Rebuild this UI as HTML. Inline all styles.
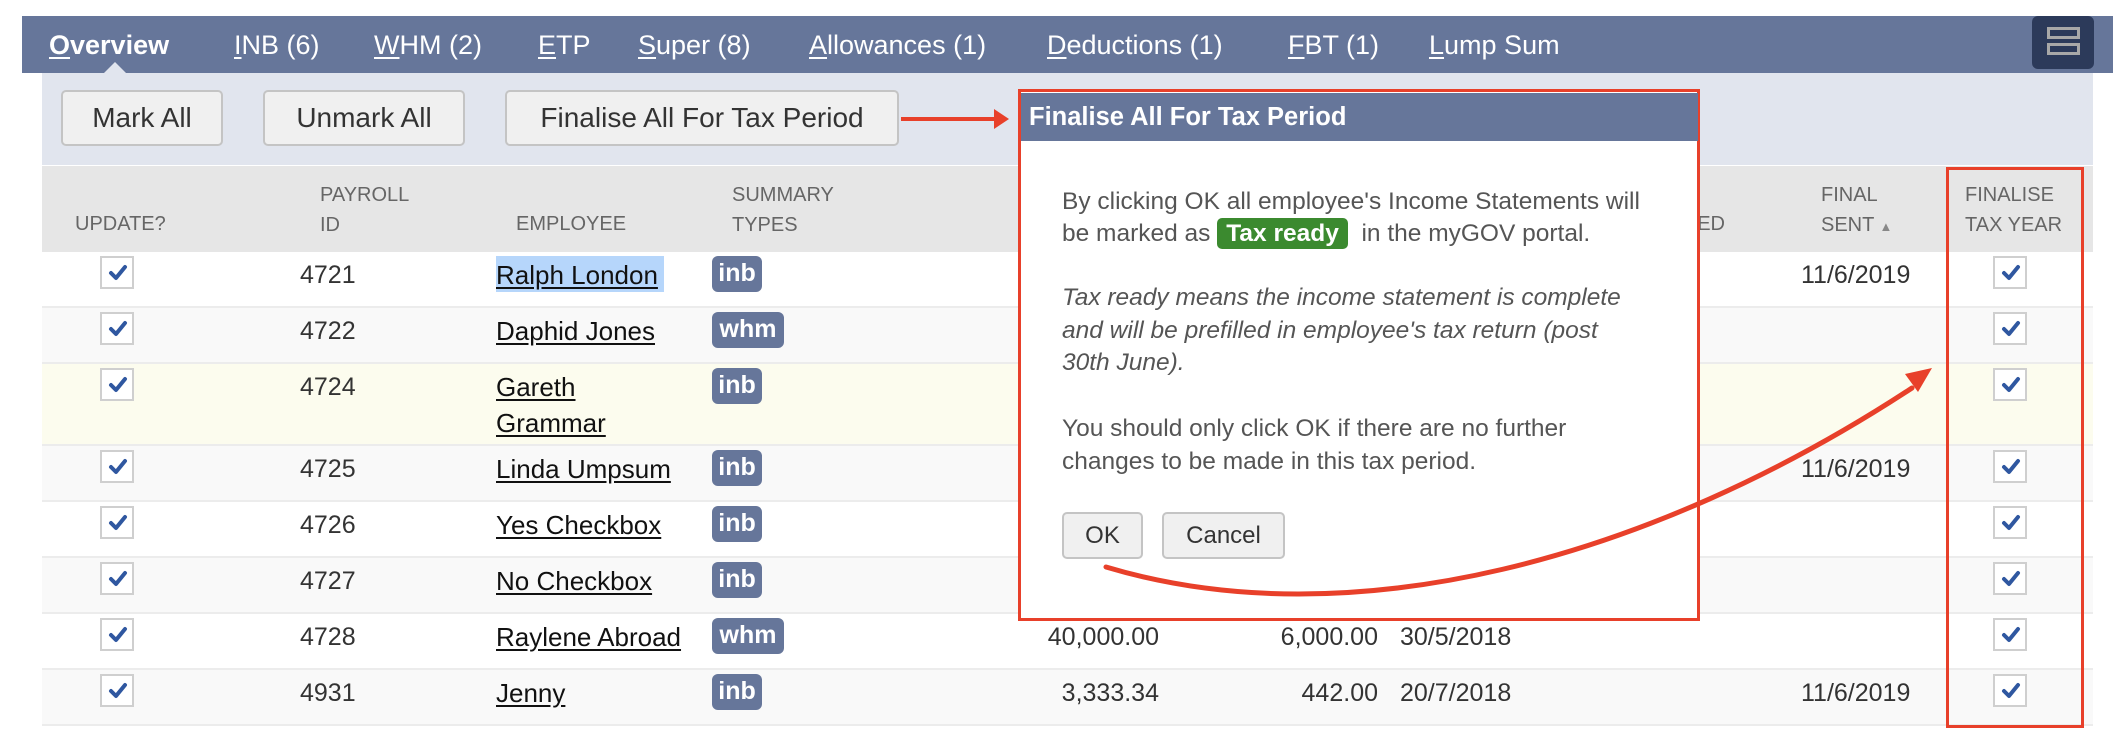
<!DOCTYPE html>
<html><head><meta charset="utf-8"><style>
*{margin:0;padding:0;box-sizing:border-box}
body{width:2124px;height:744px;background:#fff;position:relative;overflow:hidden;font-family:"Liberation Sans",Arial,sans-serif}
.a{position:absolute;white-space:nowrap}
.tab{position:absolute;top:28px;font-size:27px;color:#fff;line-height:34px}
.tab u{text-decoration:underline;text-underline-offset:3px}
.btn{position:absolute;top:90px;height:56px;background:#f0f0f0;border:2px solid #c4c4c4;border-radius:5px;font-size:28px;color:#333;text-align:center;line-height:52px}
.hd{position:absolute;font-size:20px;color:#666;line-height:30px}
.row{position:absolute;left:42px;width:2051px;border-bottom:2px solid #ececec}
.cb{position:absolute;width:34px;height:33px;border:2px solid #cfcfcf;background:#fff}
.cb svg{position:absolute;left:6px;top:5px}
.t{position:absolute;font-size:25px;color:#333;line-height:36px}
.nm{position:absolute;font-size:26px;color:#111;line-height:36px;text-decoration:underline;text-underline-offset:3px}
.bd{position:absolute;height:36px;background:#66769a;color:#fff;font-weight:bold;font-size:25px;line-height:35px;border-radius:6px;text-align:center}
.dt{position:absolute;font-size:24.5px;color:#555;line-height:32px}
</style></head><body>
<div class="a" style="left:22px;top:16px;width:2091px;height:57px;background:#66769a"></div>
<div class="tab" style="left:49px;font-weight:bold"><u>O</u>verview</div>
<div class="a" style="left:104px;top:62px;width:0;height:0;border-left:11px solid transparent;border-right:11px solid transparent;border-bottom:11px solid #e1e5ee"></div>
<div class="tab" style="left:234px"><u>I</u>NB (6)</div>
<div class="tab" style="left:374px"><u>W</u>HM (2)</div>
<div class="tab" style="left:538px"><u>E</u>TP</div>
<div class="tab" style="left:638px"><u>S</u>uper (8)</div>
<div class="tab" style="left:809px"><u>A</u>llowances (1)</div>
<div class="tab" style="left:1047px"><u>D</u>eductions (1)</div>
<div class="tab" style="left:1288px"><u>F</u>BT (1)</div>
<div class="tab" style="left:1429px"><u>L</u>ump Sum</div>
<div class="a" style="left:2032px;top:16px;width:62px;height:53px;background:#2c3a5a;border-radius:6px"></div>
<div class="a" style="left:2047px;top:27px;width:33px;height:12px;border:3px solid #a8a8a8"></div>
<div class="a" style="left:2047px;top:43px;width:33px;height:12px;border:3px solid #a8a8a8"></div>
<div class="a" style="left:42px;top:73px;width:2051px;height:92px;background:#e1e5ee"></div>
<div class="btn" style="left:61px;width:162px">Mark All</div>
<div class="btn" style="left:263px;width:202px">Unmark All</div>
<div class="btn" style="left:505px;width:394px">Finalise All For Tax Period</div>
<div class="a" style="left:901px;top:117px;width:96px;height:4px;background:#e8402a"></div>
<div class="a" style="left:994px;top:109px;width:0;height:0;border-top:10px solid transparent;border-bottom:10px solid transparent;border-left:15px solid #e8402a"></div>
<div class="a" style="left:42px;top:166px;width:2051px;height:86px;background:#e6e6e6"></div>
<div class="hd" style="left:75px;top:209px">UPDATE?</div>
<div class="hd" style="left:320px;top:180px">PAYROLL<br>ID</div>
<div class="hd" style="left:516px;top:209px">EMPLOYEE</div>
<div class="hd" style="left:732px;top:180px">SUMMARY<br>TYPES</div>
<div class="hd" style="left:1685px;top:209px">TED</div>
<div class="hd" style="left:1821px;top:180px">FINAL<br>SENT <span style="font-size:13px;color:#888">▲</span></div>
<div class="hd" style="left:1965px;top:180px">FINALISE<br>TAX YEAR</div>
<div class="row" style="top:252px;height:56px;background:#fff"></div>
<div class="row" style="top:308px;height:56px;background:#f9f9f9"></div>
<div class="row" style="top:364px;height:82px;background:#fcfcee"></div>
<div class="row" style="top:446px;height:56px;background:#f9f9f9"></div>
<div class="row" style="top:502px;height:56px;background:#fff"></div>
<div class="row" style="top:558px;height:56px;background:#f9f9f9"></div>
<div class="row" style="top:614px;height:56px;background:#fff"></div>
<div class="row" style="top:670px;height:56px;background:#f9f9f9"></div>
<svg width="0" height="0" style="position:absolute"><defs><symbol id="ck" viewBox="0 0 20 20"><path d="M3 10 L8 15 L17 4" fill="none" stroke="#2f57a0" stroke-width="4" stroke-linecap="round" stroke-linejoin="round"/></symbol></defs></svg>
<div class="cb" style="left:100px;top:256px"><svg width="20" height="20"><use href="#ck"/></svg></div>
<div class="cb" style="left:100px;top:312px"><svg width="20" height="20"><use href="#ck"/></svg></div>
<div class="cb" style="left:100px;top:368px"><svg width="20" height="20"><use href="#ck"/></svg></div>
<div class="cb" style="left:100px;top:450px"><svg width="20" height="20"><use href="#ck"/></svg></div>
<div class="cb" style="left:100px;top:506px"><svg width="20" height="20"><use href="#ck"/></svg></div>
<div class="cb" style="left:100px;top:562px"><svg width="20" height="20"><use href="#ck"/></svg></div>
<div class="cb" style="left:100px;top:618px"><svg width="20" height="20"><use href="#ck"/></svg></div>
<div class="cb" style="left:100px;top:674px"><svg width="20" height="20"><use href="#ck"/></svg></div>
<div class="cb" style="left:1993px;top:256px"><svg width="20" height="20"><use href="#ck"/></svg></div>
<div class="cb" style="left:1993px;top:312px"><svg width="20" height="20"><use href="#ck"/></svg></div>
<div class="cb" style="left:1993px;top:368px"><svg width="20" height="20"><use href="#ck"/></svg></div>
<div class="cb" style="left:1993px;top:450px"><svg width="20" height="20"><use href="#ck"/></svg></div>
<div class="cb" style="left:1993px;top:506px"><svg width="20" height="20"><use href="#ck"/></svg></div>
<div class="cb" style="left:1993px;top:562px"><svg width="20" height="20"><use href="#ck"/></svg></div>
<div class="cb" style="left:1993px;top:618px"><svg width="20" height="20"><use href="#ck"/></svg></div>
<div class="cb" style="left:1993px;top:674px"><svg width="20" height="20"><use href="#ck"/></svg></div>
<div class="t" style="left:300px;top:257px">4721</div>
<div class="t" style="left:300px;top:313px">4722</div>
<div class="t" style="left:300px;top:369px">4724</div>
<div class="t" style="left:300px;top:451px">4725</div>
<div class="t" style="left:300px;top:507px">4726</div>
<div class="t" style="left:300px;top:563px">4727</div>
<div class="t" style="left:300px;top:619px">4728</div>
<div class="t" style="left:300px;top:675px">4931</div>
<div class="a" style="left:496px;top:256px;width:168px;height:36px;background:#b6d6fb"></div>
<div class="nm" style="left:496px;top:257px">Ralph London</div>
<div class="nm" style="left:496px;top:313px">Daphid Jones</div>
<div class="nm" style="left:496px;top:369px">Gareth</div>
<div class="nm" style="left:496px;top:405px">Grammar</div>
<div class="nm" style="left:496px;top:451px">Linda Umpsum</div>
<div class="nm" style="left:496px;top:507px">Yes Checkbox</div>
<div class="nm" style="left:496px;top:563px">No Checkbox</div>
<div class="nm" style="left:496px;top:619px">Raylene Abroad</div>
<div class="nm" style="left:496px;top:675px">Jenny</div>
<div class="bd" style="left:712px;top:256px;width:50px">inb</div>
<div class="bd" style="left:712px;top:312px;width:72px">whm</div>
<div class="bd" style="left:712px;top:368px;width:50px">inb</div>
<div class="bd" style="left:712px;top:450px;width:50px">inb</div>
<div class="bd" style="left:712px;top:506px;width:50px">inb</div>
<div class="bd" style="left:712px;top:562px;width:50px">inb</div>
<div class="bd" style="left:712px;top:618px;width:72px">whm</div>
<div class="bd" style="left:712px;top:674px;width:50px">inb</div>
<div class="t" style="right:965px;top:619px">40,000.00</div>
<div class="t" style="right:746px;top:619px">6,000.00</div>
<div class="t" style="left:1400px;top:619px">30/5/2018</div>
<div class="t" style="right:965px;top:675px">3,333.34</div>
<div class="t" style="right:746px;top:675px">442.00</div>
<div class="t" style="left:1400px;top:675px">20/7/2018</div>
<div class="t" style="left:1801px;top:257px">11/6/2019</div>
<div class="t" style="left:1801px;top:451px">11/6/2019</div>
<div class="t" style="left:1801px;top:675px">11/6/2019</div>
<div class="a" style="left:1946px;top:167px;width:138px;height:561px;border:3px solid #e8402a"></div>
<div class="a" style="left:1018px;top:89px;width:682px;height:532px;border:3px solid #e8402a;background:#fff"></div>
<div class="a" style="left:1021px;top:93px;width:677px;height:48px;background:#66769a"></div>
<div class="a" style="left:1029px;top:100px;font-size:25.5px;font-weight:bold;color:#fff;line-height:34px">Finalise All For Tax Period</div>
<div class="dt" style="left:1062px;top:186px">By clicking OK all employee's Income Statements will</div>
<div class="dt" style="left:1062px;top:218px">be marked as <span style="display:inline-block;background:#3b8a2f;color:#fff;font-weight:bold;border-radius:5px;padding:0 9px;line-height:31px">Tax ready</span>&nbsp; in the myGOV portal.</div>
<div class="dt" style="left:1062px;top:282px;font-style:italic">Tax ready means the income statement is complete</div>
<div class="dt" style="left:1062px;top:315px;font-style:italic">and will be prefilled in employee's tax return (post</div>
<div class="dt" style="left:1062px;top:347px;font-style:italic">30th June).</div>
<div class="dt" style="left:1062px;top:413px">You should only click OK if there are no further</div>
<div class="dt" style="left:1062px;top:446px">changes to be made in this tax period.</div>
<div class="btn" style="left:1062px;top:512px;width:81px;height:47px;line-height:43px;font-size:24px">OK</div>
<div class="btn" style="left:1162px;top:512px;width:123px;height:47px;line-height:43px;font-size:24px">Cancel</div>
<svg class="a" style="left:0;top:0" width="2124" height="744">
<path d="M1106 567 C1350 640 1650 560 1912 388" fill="none" stroke="#e8402a" stroke-width="5" stroke-linecap="round"/>
<polygon points="1932,368 1905,374 1918,392" fill="#e8402a"/>
</svg>
</body></html>
